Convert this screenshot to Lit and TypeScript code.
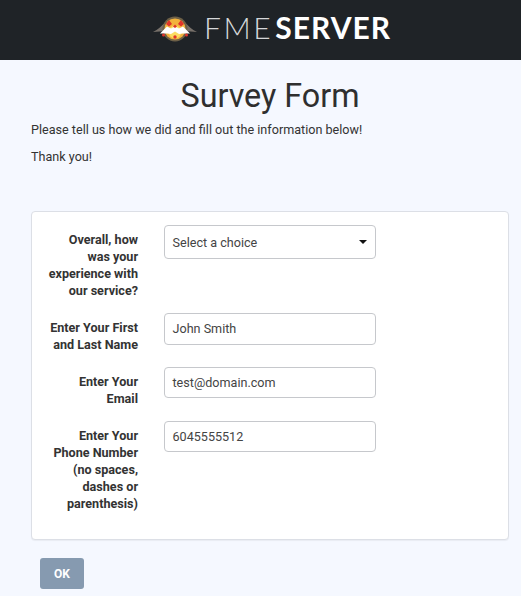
import { LitElement, html, css } from "lit";
import { customElement } from "lit/decorators.js";

@customElement("app-root")
export class AppRoot extends LitElement {
  static styles = css`
    :host { display: block; height: 596px; overflow: hidden; background: #f5f8ff; font-family: Roboto, sans-serif; font-size: 12.6px; line-height: 17px; color: #333; }
    .header { height: 60px; background: #1f2327; display: flex; align-items: flex-start; justify-content: center; padding: 7px 0 0 23px; box-sizing: border-box; }
    .logo { display: flex; align-items: center; }
    .logo svg { display: block; margin-right: 7px; }
    .brand { font-family: Lato, sans-serif; font-size: 30px; line-height: 40px; white-space: nowrap; }
    .fme { font-weight: 300; color: #d5d7d9; letter-spacing: 2.6px; }
    .server { font-weight: 700; color: #fff; letter-spacing: 1px; margin-left: 2px; }
    h1 { margin: 0; font-weight: 400; font-size: 32.3px; line-height: 40px; text-align: center; color: #2f2f2f; padding: 16px 0 0 19px; }
    .intro { padding: 0 31px; }
    p { margin: 0 0 10px; line-height: 17px; }
    .intro p:first-child { margin-top: 5px; }
    .card { margin: 46px 12px 0 31px; background: #fff; border: 1px solid #dcdfe6; border-radius: 4px; padding: 13px 0 27px; box-shadow: 0 1px 1px rgba(0,0,0,.05); display: flex; flex-direction: column; gap: 14px; }
    .row { display: grid; grid-template-columns: 106px 212px; column-gap: 26px; align-items: start; }
    label { font-weight: 700; text-align: right; padding: 6px 0 0 15px; color: #333; }
    .control { height: 32px; box-sizing: border-box; border: 1px solid #c6c8cc; border-radius: 4px; background: #fff; padding: 0 8px 1px 7.5px; color: #444; display: flex; align-items: center; font-family: inherit; }
    .short { height: 31px; padding-bottom: 0; }
    .select { height: 34px; justify-content: space-between; padding-bottom: 0; }
    .caret { width: 0; height: 0; border-left: 4px solid transparent; border-right: 4px solid transparent; border-top: 4px solid #111; }
    .actions { padding: 18px 0 0 40px; }
    .ok { display: block; width: 44px; height: 31px; border: 0; border-radius: 3px; background: #869ab0; color: #fff; font: 700 12px Roboto, sans-serif; padding: 0; }
  `;

  render() {
    return html`
      <div class="header">
        <div class="logo">
          <svg width="44" height="30" viewBox="0 0 44 30">
            <defs>
              <filter id="soft" x="-20%" y="-20%" width="140%" height="140%"><feGaussianBlur stdDeviation="0.7"/></filter>
              <filter id="crisp" x="-10%" y="-10%" width="120%" height="120%"><feGaussianBlur stdDeviation="0.25"/></filter>
            </defs>
            <path d="M0 20 C5 18 9 13 13 10 L31 10 C35 13 39 18 44 20 L31 19 L13 19 Z" fill="#77706a" filter="url(#crisp)"/>
            <circle cx="22" cy="17" r="12.500" fill="#6e6147" filter="url(#soft)"/>
            <circle cx="22" cy="17" r="10.500" fill="#f2b33d" filter="url(#soft)"/>
            <circle cx="22" cy="20" r="6.500" fill="#fbdc62" filter="url(#soft)"/>
            <path d="M7 21.500 L14 14.500 L18 16.500 L22 14.500 L26 16.500 L30 14.500 L37 21.500 L30 21.500 L26 22 L22 19.500 L18 22 L14 21.500 Z" fill="#fff" filter="url(#crisp)"/>
            <path d="M16 8 L19 12 L16 14.500 L13 12 Z M28 8 L31 12 L28 14.500 L25 12 Z M20 14.500 L22 12.500 L24 14.500 L22 16 Z" fill="#e0342c" filter="url(#crisp)"/>
            <circle cx="10.500" cy="23" r="1.500" fill="#e0342c"/>
            <circle cx="22" cy="25" r="1.700" fill="#e0342c"/>
            <circle cx="33.500" cy="23" r="1.500" fill="#e0342c"/>
          </svg>
          <div class="brand"><span class="fme">FME</span><span class="server">SERVER</span></div>
        </div>
      </div>
      <h1>Survey Form</h1>
      <div class="intro">
        <p>Please tell us how we did and fill out the information below!</p>
        <p>Thank you!</p>
      </div>
      <div class="card">
        <div class="row">
          <label>Overall, how was your experience with our service?</label>
          <div class="control select"><span>Select a choice</span><span class="caret"></span></div>
        </div>
        <div class="row">
          <label>Enter Your First and Last Name</label>
          <div class="control">John Smith</div>
        </div>
        <div class="row">
          <label>Enter Your Email</label>
          <div class="control short">test@domain.com</div>
        </div>
        <div class="row">
          <label>Enter Your Phone Number (no spaces, dashes or parenthesis)</label>
          <div class="control short">6045555512</div>
        </div>
      </div>
      <div class="actions"><button class="ok">OK</button></div>
    `;
  }
}
